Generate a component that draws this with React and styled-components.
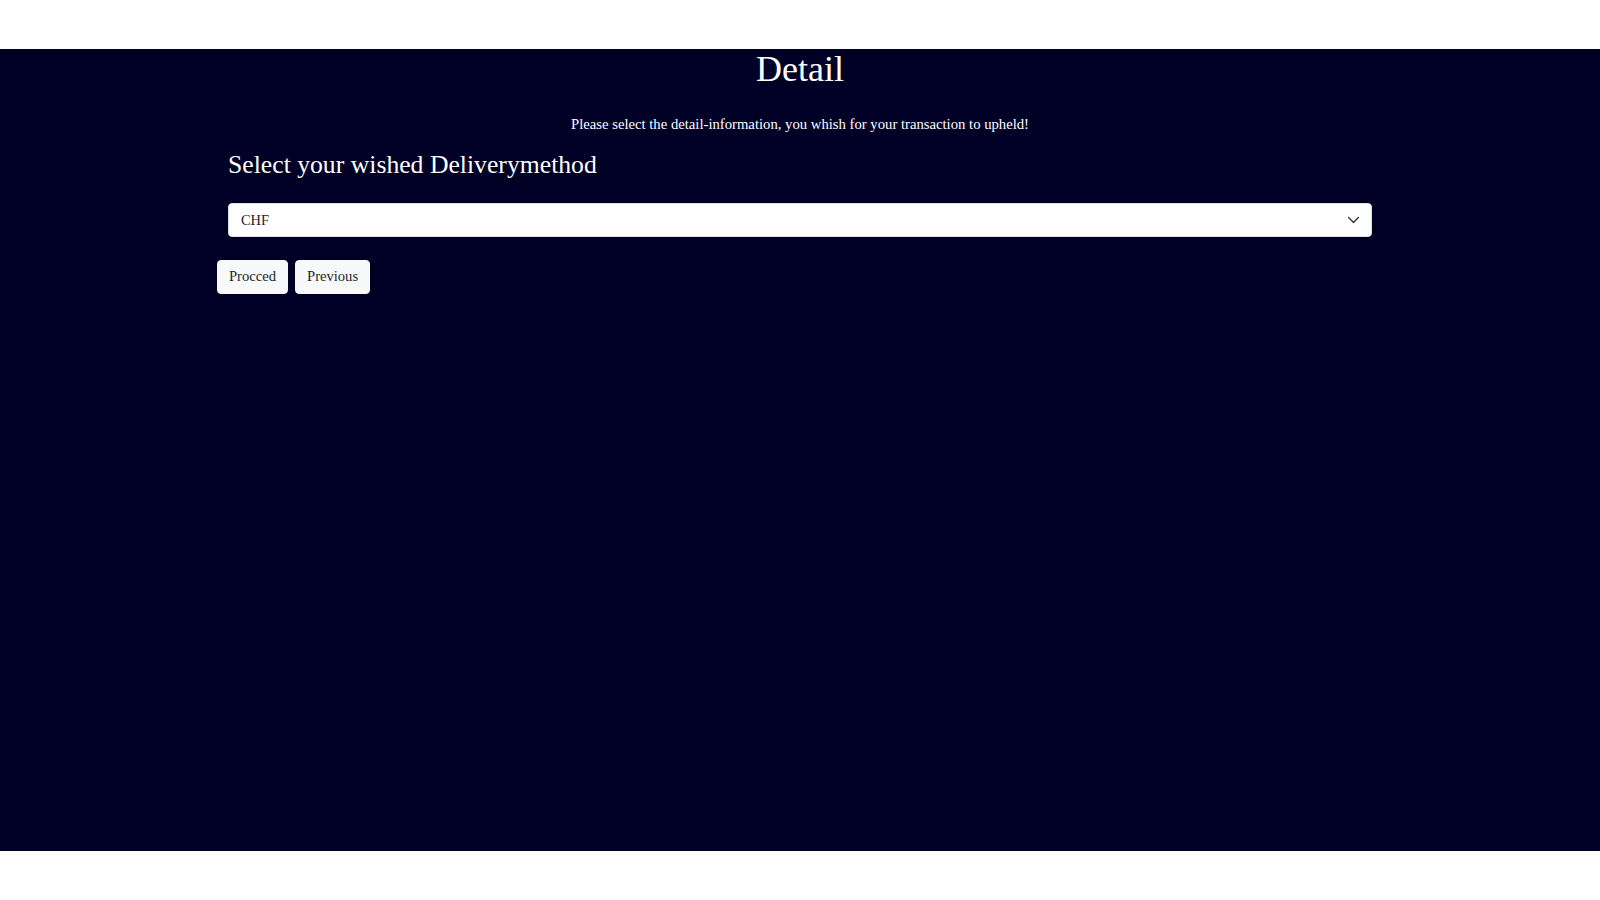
import React from "react";
import styled, { createGlobalStyle } from "styled-components";

const GlobalStyle = createGlobalStyle`
  body {
    margin: 0;
    background: #ffffff;
    font-family: "Liberation Serif", "Times New Roman", serif;
  }
`;

export default function App() {
  return (
    <>
      <GlobalStyle />
      <Page>
        <Title>Detail</Title>
        <Intro>
          Please select the detail-information, you whish for your transaction
          to upheld!
        </Intro>
        <Container>
          <Form>
            <FormHeading>Select your wished Deliverymethod</FormHeading>
            <SelectWrap>
              <Select defaultValue="CHF">
                <option value="CHF">CHF</option>
              </Select>
              <Chevron viewBox="0 0 16 16">
                <path
                  d="m2 5 6 6 6-6"
                  fill="none"
                  stroke="#343a40"
                  strokeWidth="1.7"
                  strokeLinecap="round"
                  strokeLinejoin="round"
                />
              </Chevron>
            </SelectWrap>
          </Form>
          <Actions>
            <Button>Procced</Button>
            <Button>Previous</Button>
          </Actions>
        </Container>
      </Page>
    </>
  );
}

const Page = styled.main`
  margin-top: 49px;
  height: 802px;
  background: #000027;
  color: #ffffff;
  display: flex;
  flex-direction: column;
  align-items: center;
`;

const Title = styled.h1`
  margin: 0;
  font-size: 36px;
  font-weight: 400;
  line-height: 40px;
  text-align: center;
`;

const Intro = styled.p`
  margin: 25px 0 0;
  font-size: 14.7px;
  line-height: 21.6px;
  text-align: center;
`;

const Container = styled.div`
  width: 1166px;
  margin-top: 14px;
`;

const Form = styled.div`
  padding: 0 11px;
`;

const FormHeading = styled.h3`
  margin: 0;
  font-size: 25.7px;
  font-weight: 400;
  line-height: 30px;
`;

const SelectWrap = styled.div`
  position: relative;
  margin-top: 23px;
`;

const Select = styled.select`
  appearance: none;
  display: block;
  width: 100%;
  height: 34px;
  box-sizing: border-box;
  padding: 0 34px 0 12px;
  font-family: "Liberation Serif", "Times New Roman", serif;
  font-size: 14.4px;
  color: #212529;
  background: #ffffff;
  border: 1px solid #dee2e6;
  border-radius: 4px;
  outline: none;
`;

const Chevron = styled.svg`
  position: absolute;
  right: 12px;
  top: 50%;
  width: 13px;
  height: 13px;
  transform: translateY(-50%);
  pointer-events: none;
`;

const Actions = styled.div`
  display: flex;
  gap: 7px;
  margin-top: 23px;
`;

const Button = styled.button`
  height: 34px;
  padding: 0 11px;
  font-family: "Liberation Serif", "Times New Roman", serif;
  font-size: 14.6px;
  color: #212529;
  background: #f8f9fa;
  border: 1px solid #f8f9fa;
  border-radius: 4px;
  cursor: pointer;
`;
